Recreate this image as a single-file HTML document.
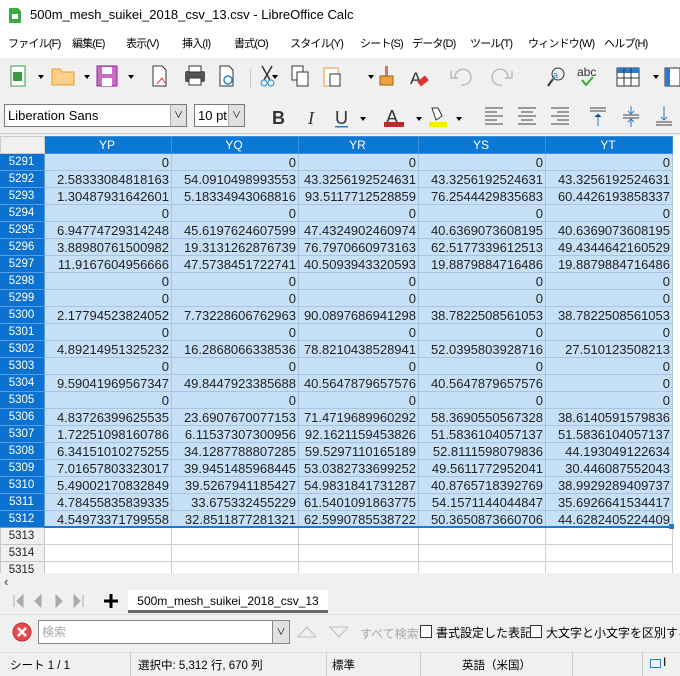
<!DOCTYPE html>
<html><head><meta charset="utf-8"><style>
*{margin:0;padding:0;box-sizing:border-box}
body{width:680px;height:676px;overflow:hidden;background:#f0f0f0;font-family:"Liberation Sans","Noto Sans CJK JP",sans-serif;position:relative;color:#000}
.a{position:absolute}
.title{top:0;left:0;width:680px;height:30px;background:#fff;font-size:13px;line-height:30px;padding-left:30px}
.menu{top:30px;left:0;width:680px;height:28px;background:#fff;font-size:11px;line-height:28px;letter-spacing:-0.8px}
.menu span{position:absolute;top:0;white-space:nowrap}
.tb{left:0;width:680px;height:38px;background:#f0f0f0}
.grid{top:136px;left:0;width:680px;height:437px;background:#fff;overflow:hidden}
table{border-collapse:collapse;table-layout:fixed;font-size:13px}
td{height:17px;border:1px solid #a9c4de;padding:0 2px 0 0;text-align:right;line-height:15px;background:#c6e0f7;white-space:nowrap;overflow:hidden;color:#222}
td.h{background:#0b72d1;color:#fff;text-align:center;font-size:11.5px;border-color:#0b72d1 #5b9ce0 #5b9ce0 #0b72d1}
tr.hd td{background:#0b78d4;color:#fff;text-align:center;font-size:12px;border-color:#3d8fdc}
tr.hd td.c{background:#f0f0f0;border-color:#ccc}
tr.e td{background:#fff;border-color:#d0d0d0}
tr.e td.h{background:#f0f0f0;color:#222;border-color:#c8c8c8}
</style></head><body>
<div class="a title">500m_mesh_suikei_2018_csv_13.csv - LibreOffice Calc</div>
<svg class="a" style="left:8px;top:7px" width="14" height="17"><path d="M1 1h9l3 3v12H1z" fill="#3daa4a"/><rect x="4" y="7" width="6" height="5" fill="#fff"/></svg>
<div class="a menu">
<span style="left:8px">ファイル(F)</span><span style="left:72px">編集(E)</span><span style="left:126px">表示(V)</span><span style="left:182px">挿入(I)</span><span style="left:234px">書式(O)</span><span style="left:290px">スタイル(Y)</span><span style="left:360px">シート(S)</span><span style="left:412px">データ(D)</span><span style="left:470px">ツール(T)</span><span style="left:528px">ウィンドウ(W)</span><span style="left:604px">ヘルプ(H)</span>
</div>
<div class="a tb" style="top:58px"></div>
<svg class="a" style="left:0;top:58px" width="680" height="40">
<rect x="11" y="8" width="14" height="20" fill="#fff" stroke="#3a9a40"/><rect x="13" y="14" width="9" height="9" fill="#3a9a40"/>
<path d="M38 17l3 4 3-4z M84 17l3 4 3-4z M128 17l3 4 3-4z M272 17l3 4 3-4z M368 17l3 4 3-4z M653 17l3 4 3-4z"/>
<path d="M52 11h8l2 3h12v13H52z" fill="#fcd088" stroke="#e89a30"/>
<rect x="97" y="8" width="20" height="20" fill="#c86cc8" stroke="#8a2a8a"/><rect x="102" y="9" width="10" height="7" fill="#fff"/><rect x="102" y="20" width="10" height="8" fill="#fff"/>
<path d="M153 8h9l4 4v16h-13z" fill="#fff" stroke="#333"/><path d="M157 26l5-6 3 5" stroke="#e33" fill="none"/>
<rect x="185" y="13" width="20" height="11" rx="2" fill="#555"/><rect x="189" y="8" width="12" height="6" fill="#fff" stroke="#333"/><rect x="189" y="20" width="12" height="7" fill="#fff" stroke="#333"/>
<path d="M220 8h9l4 4v16h-13z" fill="#fff" stroke="#333"/><circle cx="228" cy="22" r="4" fill="none" stroke="#2a8ad0" stroke-width="1.5"/>
<path d="M262 8l8 14M272 8l-8 14" stroke="#333" stroke-width="1.5"/><circle cx="264" cy="25" r="3" fill="none" stroke="#2a8ad0"/><circle cx="271" cy="25" r="3" fill="none" stroke="#2a8ad0"/>
<rect x="292" y="8" width="11" height="14" fill="#fff" stroke="#333"/><rect x="297" y="14" width="11" height="14" fill="#fff" stroke="#333"/>
<rect x="250" y="11" width="1" height="20" fill="#ccc"/>
<rect x="324" y="10" width="14" height="18" fill="#fff" stroke="#e89a30"/><rect x="330" y="16" width="10" height="12" fill="#fff" stroke="#333"/>
<rect x="385" y="8" width="3" height="10" fill="#c77"/><rect x="380" y="18" width="13" height="9" fill="#f0a040" stroke="#a06010"/>
<text x="410" y="26" font-size="17" font-family="Liberation Sans" fill="#333">A</text><rect x="418" y="20" width="10" height="6" fill="#e03030" transform="rotate(-40 423 23)"/>
<path d="M455 20a8 8 0 1 1 6 7M451 13v7h7" stroke="#bbb" fill="none" stroke-width="1.5"/>
<path d="M508 20a8 8 0 1 0-6 7M512 13v7h-7" stroke="#bbb" fill="none" stroke-width="1.5"/>
<circle cx="558" cy="16" r="6" fill="none" stroke="#333"/><text x="553" y="20" font-size="9" fill="#2a8ad0">a</text><path d="M553 21l-5 7" stroke="#333" stroke-width="2"/>
<text x="577" y="18" font-size="12" font-family="Liberation Sans" fill="#333">abc</text><path d="M582 22l4 5 7-8" stroke="#3a3" fill="none" stroke-width="2"/>
<rect x="617" y="10" width="22" height="18" fill="#fff" stroke="#333"/><rect x="617" y="10" width="22" height="5" fill="#2a7ad0"/><path d="M617 20h22M624 10v18M631 10v18" stroke="#333"/>
<rect x="665" y="10" width="15" height="18" fill="#fff" stroke="#333"/><rect x="665" y="10" width="5" height="18" fill="#2a7ad0"/>
</svg>
<div class="a" style="left:4px;top:104px;width:183px;height:23px;background:#fff;border:1px solid #7a7a7a;font-size:13px;line-height:21px;padding-left:3px">Liberation Sans</div>
<div class="a" style="left:170px;top:105px;width:16px;height:21px;background:#e1e1e1;border-left:1px solid #aaa;font-size:9px;text-align:center;line-height:21px">∨</div>
<div class="a" style="left:194px;top:104px;width:51px;height:23px;background:#fff;border:1px solid #7a7a7a;font-size:13px;line-height:21px;padding-left:3px">10 pt</div>
<div class="a" style="left:228px;top:105px;width:16px;height:21px;background:#e1e1e1;border-left:1px solid #aaa;font-size:9px;text-align:center;line-height:21px">∨</div>
<svg class="a" style="left:250px;top:98px" width="430" height="36">
<text x="22" y="26" font-size="18" font-weight="bold" font-family="Liberation Sans" fill="#333">B</text>
<text x="58" y="26" font-size="18" font-style="italic" font-family="Liberation Serif" fill="#333">I</text>
<text x="85" y="26" font-size="18" font-family="Liberation Sans" fill="#333">U</text><rect x="85" y="28" width="13" height="1.5" fill="#2a7ad0"/>
<path d="M110 19l3 4 3-4z M166 19l3 4 3-4z M206 19l3 4 3-4z"/>
<text x="136" y="25" font-size="18" font-family="Liberation Sans" fill="#333">A</text><rect x="134" y="24" width="20" height="5" fill="#c0282c"/>
<rect x="179" y="24" width="18" height="5" fill="#f5f000"/><path d="M182 10l6 0 4 8-6 4z" fill="#fff" stroke="#333"/>
<path d="M235 10h18M235 14h12M235 18h18M235 22h12M235 26h18 M268 10h18M271 14h12M268 18h18M271 22h12M268 26h18 M301 10h18M307 14h12M301 18h18M307 22h12M301 26h18" stroke="#444"/>
<path d="M340 10h16M340 13h16M348 16v12M345 19l3-3 3 3" stroke="#2a7ad0"/><path d="M340 10h16M340 13h16" stroke="#444"/>
<path d="M373 17h16M373 20h16" stroke="#444"/><path d="M381 8v8M378 13l3 3 3-3M381 29v-8M378 24l3-3 3 3" stroke="#2a7ad0" fill="none"/>
<path d="M406 24h16M406 27h16" stroke="#444"/><path d="M414 8v14M411 19l3 3 3-3" stroke="#2a7ad0" fill="none"/>
</svg>
<div class="a" style="left:0;top:133px;width:680px;height:1px;background:#ccc"></div>
<div class="a grid">
<table style="width:672px">
<colgroup><col style="width:44px"><col style="width:127px"><col style="width:127px"><col style="width:120px"><col style="width:127px"><col style="width:127px"></colgroup>
<tr class="hd"><td class="c"></td><td>YP</td><td>YQ</td><td>YR</td><td>YS</td><td>YT</td></tr>
<tr><td class="h">5291</td><td>0</td><td>0</td><td>0</td><td>0</td><td>0</td></tr>
<tr><td class="h">5292</td><td>2.58333084818163</td><td>54.0910498993553</td><td>43.3256192524631</td><td>43.3256192524631</td><td>43.3256192524631</td></tr>
<tr><td class="h">5293</td><td>1.30487931642601</td><td>5.18334943068816</td><td>93.5117712528859</td><td>76.2544429835683</td><td>60.4426193858337</td></tr>
<tr><td class="h">5294</td><td>0</td><td>0</td><td>0</td><td>0</td><td>0</td></tr>
<tr><td class="h">5295</td><td>6.94774729314248</td><td>45.6197624607599</td><td>47.4324902460974</td><td>40.6369073608195</td><td>40.6369073608195</td></tr>
<tr><td class="h">5296</td><td>3.88980761500982</td><td>19.3131262876739</td><td>76.7970660973163</td><td>62.5177339612513</td><td>49.4344642160529</td></tr>
<tr><td class="h">5297</td><td>11.9167604956666</td><td>47.5738451722741</td><td>40.5093943320593</td><td>19.8879884716486</td><td>19.8879884716486</td></tr>
<tr><td class="h">5298</td><td>0</td><td>0</td><td>0</td><td>0</td><td>0</td></tr>
<tr><td class="h">5299</td><td>0</td><td>0</td><td>0</td><td>0</td><td>0</td></tr>
<tr><td class="h">5300</td><td>2.17794523824052</td><td>7.73228606762963</td><td>90.0897686941298</td><td>38.7822508561053</td><td>38.7822508561053</td></tr>
<tr><td class="h">5301</td><td>0</td><td>0</td><td>0</td><td>0</td><td>0</td></tr>
<tr><td class="h">5302</td><td>4.89214951325232</td><td>16.2868066338536</td><td>78.8210438528941</td><td>52.0395803928716</td><td>27.510123508213</td></tr>
<tr><td class="h">5303</td><td>0</td><td>0</td><td>0</td><td>0</td><td>0</td></tr>
<tr><td class="h">5304</td><td>9.59041969567347</td><td>49.8447923385688</td><td>40.5647879657576</td><td>40.5647879657576</td><td>0</td></tr>
<tr><td class="h">5305</td><td>0</td><td>0</td><td>0</td><td>0</td><td>0</td></tr>
<tr><td class="h">5306</td><td>4.83726399625535</td><td>23.6907670077153</td><td>71.4719689960292</td><td>58.3690550567328</td><td>38.6140591579836</td></tr>
<tr><td class="h">5307</td><td>1.72251098160786</td><td>6.11537307300956</td><td>92.1621159453826</td><td>51.5836104057137</td><td>51.5836104057137</td></tr>
<tr><td class="h">5308</td><td>6.34151010275255</td><td>34.1287788807285</td><td>59.5297110165189</td><td>52.8111598079836</td><td>44.193049122634</td></tr>
<tr><td class="h">5309</td><td>7.01657803323017</td><td>39.9451485968445</td><td>53.0382733699252</td><td>49.5611772952041</td><td>30.446087552043</td></tr>
<tr><td class="h">5310</td><td>5.49002170832849</td><td>39.5267941185427</td><td>54.9831841731287</td><td>40.8765718392769</td><td>38.9929289409737</td></tr>
<tr><td class="h">5311</td><td>4.78455835839335</td><td>33.675332455229</td><td>61.5401091863775</td><td>54.1571144044847</td><td>35.6926641534417</td></tr>
<tr><td class="h">5312</td><td>4.54973371799558</td><td>32.8511877281321</td><td>62.5990785538722</td><td>50.3650873660706</td><td>44.6282405224409</td></tr>
<tr class="e"><td class="h">5313</td><td></td><td></td><td></td><td></td><td></td></tr>
<tr class="e"><td class="h">5314</td><td></td><td></td><td></td><td></td><td></td></tr>
<tr class="e"><td class="h">5315</td><td></td><td></td><td></td><td></td><td></td></tr>
</table>
<div class="a" style="left:44px;top:390px;width:628px;height:2px;background:#1a7ad8"></div>
<div class="a" style="left:669px;top:388px;width:5px;height:5px;background:#1a7ad8"></div>
</div>
<div class="a" style="left:4px;top:574px;font-size:13px;color:#333">‹</div>
<svg class="a" style="left:8px;top:592px" width="115" height="18">
<path d="M6 3v12M15 3l-6 6 6 6z M33 3l-6 6 6 6z M48 3l6 6-6 6z M66 3l6 6-6 6zM75 3v12" fill="#aaa" stroke="#aaa"/>
<path d="M103 2v14M96 9h14" stroke="#000" stroke-width="3"/>
</svg>
<div class="a" style="left:128px;top:590px;width:200px;height:23px;background:#fff;font-size:12px;text-align:center;line-height:23px;border-bottom:3px solid #666">500m_mesh_suikei_2018_csv_13</div>
<div class="a" style="left:0;top:614px;width:680px;height:1px;background:#ddd"></div>
<svg class="a" style="left:12px;top:621px" width="22" height="22"><circle cx="10" cy="11" r="9" fill="#e84a4a" stroke="#b33"/><path d="M6 7l8 8M14 7l-8 8" stroke="#fff" stroke-width="2.5"/></svg>
<div class="a" style="left:38px;top:620px;width:252px;height:24px;background:#fff;border:1px solid #888;font-size:12px;color:#aaa;line-height:22px;padding-left:3px">検索</div>
<div class="a" style="left:272px;top:621px;width:17px;height:22px;background:#e1e1e1;border-left:1px solid #888;font-size:9px;text-align:center;line-height:22px">∨</div>
<svg class="a" style="left:296px;top:624px" width="60" height="16"><path d="M2 13l9-10 9 10z M34 3l9 10 9-10z" fill="none" stroke="#bbb"/></svg>
<div class="a" style="left:360px;top:625px;font-size:12px;color:#aaa">すべて検索</div>
<div class="a" style="left:420px;top:625px;width:12px;height:13px;border:1px solid #333;background:#fff"></div>
<div class="a" style="left:436px;top:624px;font-size:12px">書式設定した表記</div>
<div class="a" style="left:530px;top:625px;width:12px;height:13px;border:1px solid #333;background:#fff"></div>
<div class="a" style="left:546px;top:624px;font-size:12px;white-space:nowrap">大文字と小文字を区別する</div>
<div class="a" style="left:0;top:652px;width:680px;height:1px;background:#ddd"></div>
<div class="a" style="left:10px;top:657px;font-size:11.5px">シート 1 / 1</div>
<div class="a" style="left:130px;top:652px;width:1px;height:24px;background:#ccc"></div>
<div class="a" style="left:138px;top:657px;font-size:11.5px">選択中: 5,312 行, 670 列</div>
<div class="a" style="left:326px;top:652px;width:1px;height:24px;background:#ccc"></div>
<div class="a" style="left:332px;top:657px;font-size:11.5px">標準</div>
<div class="a" style="left:420px;top:652px;width:1px;height:24px;background:#ccc"></div>
<div class="a" style="left:462px;top:657px;font-size:11.5px">英語（米国）</div>
<div class="a" style="left:572px;top:652px;width:1px;height:24px;background:#ccc"></div>
<div class="a" style="left:642px;top:652px;width:1px;height:24px;background:#ccc"></div>
<div class="a" style="left:650px;top:659px;width:11px;height:9px;border:1px solid #2a7ad0"></div>
<div class="a" style="left:663px;top:655px;font-size:12px">I</div>
</body></html>
